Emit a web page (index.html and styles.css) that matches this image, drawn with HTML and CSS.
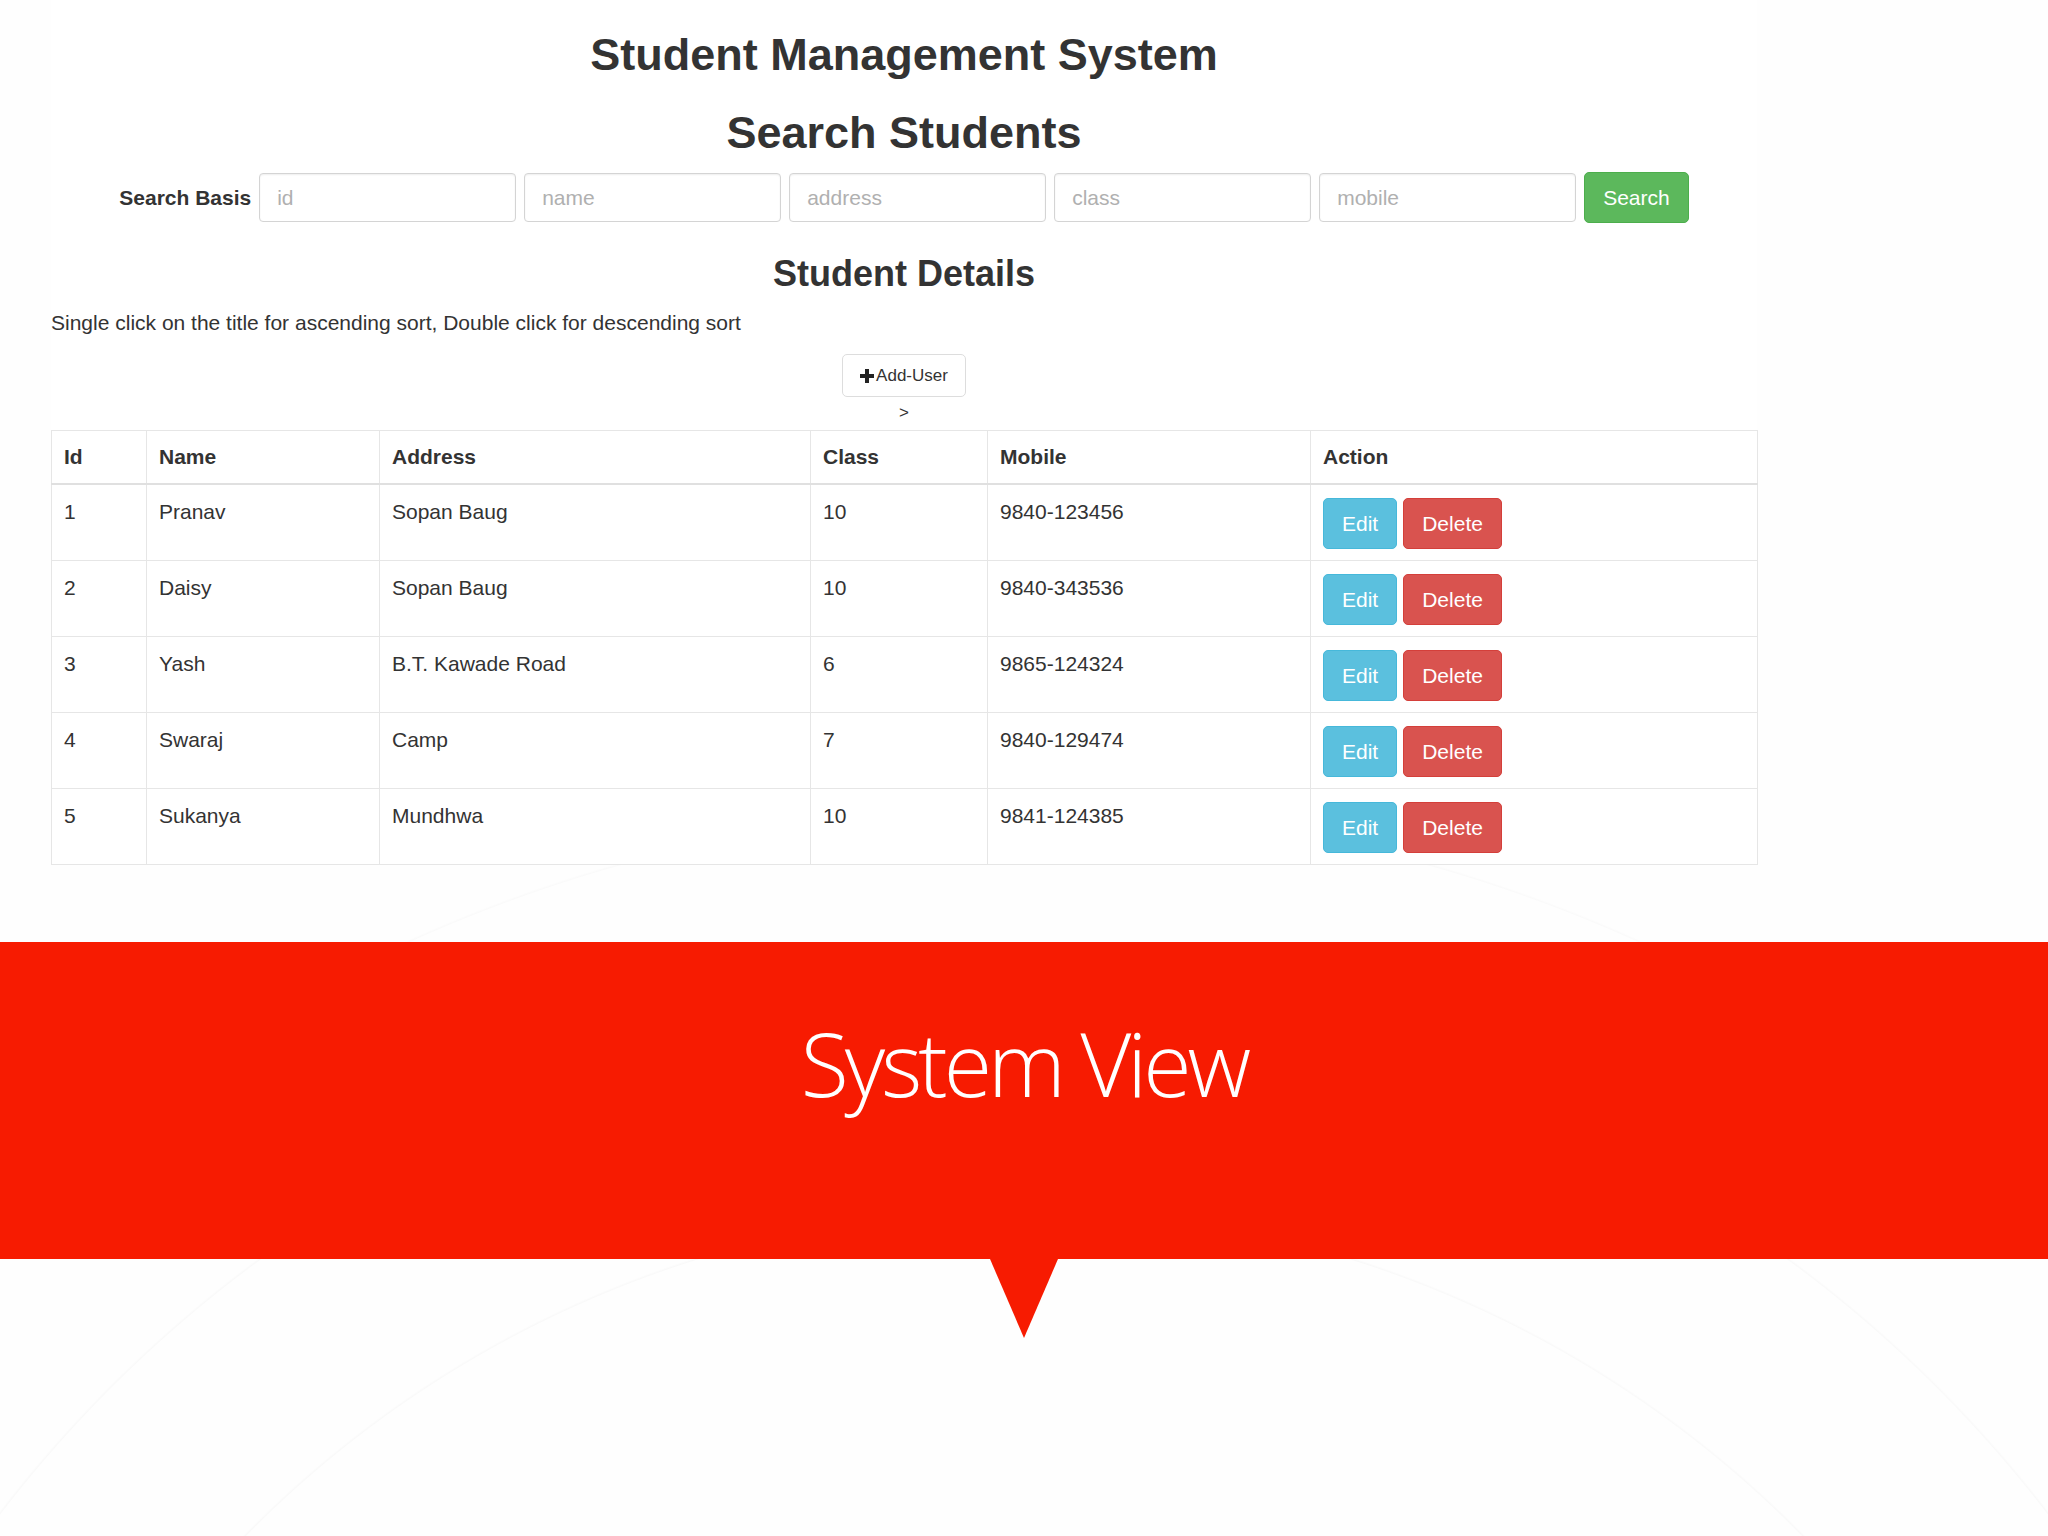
FILE: index.html
```html
<!DOCTYPE html>
<html lang="en">
<head>
<meta charset="utf-8">
<title>Student Management System</title>
<link rel="stylesheet" href="styles.css">
</head>
<body>
<div class="page">
  <main class="app">
    <h1 class="title">Student Management System</h1>
    <h1 class="title sub">Search Students</h1>
    <form class="search-row">
      <label class="search-label">Search Basis</label>
      <input class="field" type="text" placeholder="id">
      <input class="field" type="text" placeholder="name">
      <input class="field" type="text" placeholder="address">
      <input class="field" type="text" placeholder="class">
      <input class="field" type="text" placeholder="mobile">
      <button class="btn btn-success" type="button">Search</button>
    </form>
    <h2 class="details">Student Details</h2>
    <p class="hint">Single click on the title for ascending sort, Double click for descending sort</p>
    <div class="add-wrap">
      <button class="btn-add" type="button"><svg class="plus" viewBox="0 0 14 14" width="14" height="14"><path d="M5 0h4v5h5v4H9v5H5V9H0V5h5z" fill="#222"/></svg>Add-User</button>
      <span class="caret">&gt;</span>
    </div>
    <table class="grid">
      <colgroup>
        <col class="c-id"><col class="c-name"><col class="c-addr"><col class="c-class"><col class="c-mob"><col class="c-act">
      </colgroup>
      <thead>
        <tr><th>Id</th><th>Name</th><th>Address</th><th>Class</th><th>Mobile</th><th>Action</th></tr>
      </thead>
      <tbody>
        <tr><td>1</td><td>Pranav</td><td>Sopan Baug</td><td>10</td><td>9840-123456</td><td><div class="actions"><button class="btn btn-info" type="button">Edit</button><button class="btn btn-danger" type="button">Delete</button></div></td></tr>
        <tr><td>2</td><td>Daisy</td><td>Sopan Baug</td><td>10</td><td>9840-343536</td><td><div class="actions"><button class="btn btn-info" type="button">Edit</button><button class="btn btn-danger" type="button">Delete</button></div></td></tr>
        <tr><td>3</td><td>Yash</td><td>B.T. Kawade Road</td><td>6</td><td>9865-124324</td><td><div class="actions"><button class="btn btn-info" type="button">Edit</button><button class="btn btn-danger" type="button">Delete</button></div></td></tr>
        <tr><td>4</td><td>Swaraj</td><td>Camp</td><td>7</td><td>9840-129474</td><td><div class="actions"><button class="btn btn-info" type="button">Edit</button><button class="btn btn-danger" type="button">Delete</button></div></td></tr>
        <tr><td>5</td><td>Sukanya</td><td>Mundhwa</td><td>10</td><td>9841-124385</td><td><div class="actions"><button class="btn btn-info" type="button">Edit</button><button class="btn btn-danger" type="button">Delete</button></div></td></tr>
      </tbody>
    </table>
  </main>
  <section class="banner">
    <h2 class="banner-title">System View</h2>
  </section>
  <div class="pointer"></div>
</div>
</body>
</html>
```
FILE: styles.css
```css
html, body {
  margin: 0;
  padding: 0;
  background: #fefefe;
}

body {
  font-family: "Liberation Sans", Arial, sans-serif;
  color: #333;
}

.page {
  width: 2048px;
  height: 1536px;
  overflow: hidden;
  background-color: #fefefe;
  background-image:
    radial-gradient(circle at 1024px 2300px, transparent 1090px, rgba(0,0,0,0.018) 1091px, transparent 1093px),
    radial-gradient(circle at 1024px 2300px, transparent 1290px, rgba(0,0,0,0.018) 1291px, transparent 1293px),
    radial-gradient(circle at 1024px 2300px, transparent 1490px, rgba(0,0,0,0.015) 1491px, transparent 1493px);
}

.app {
  width: 1706px;
  margin-left: 51px;
  padding-top: 29px;
  background: #fff;
}

.title {
  margin: 0;
  font-size: 45px;
  line-height: 52px;
  font-weight: bold;
  text-align: center;
  color: #333;
}

.sub {
  margin-top: 26px;
}

.search-row {
  display: flex;
  justify-content: center;
  align-items: center;
  gap: 8px;
  height: 51px;
  margin: 13px 0 0;
}

.search-label {
  font-size: 21px;
  font-weight: bold;
  color: #333;
}

.field {
  width: 257px;
  height: 49px;
  box-sizing: border-box;
  padding: 0 17px;
  border: 1px solid #d4d4d4;
  border-radius: 4px;
  box-shadow: inset 0 1px 2px rgba(0,0,0,0.07);
  font-family: "Liberation Sans", Arial, sans-serif;
  font-size: 21px;
  color: #555;
  background: #fff;
}

.field::placeholder {
  color: #b0b0b0;
}

.btn {
  height: 51px;
  box-sizing: border-box;
  padding: 0 18px;
  border: 1px solid transparent;
  border-radius: 5px;
  font-family: "Liberation Sans", Arial, sans-serif;
  font-size: 21px;
  color: #fff;
  cursor: pointer;
}

.btn-success {
  background: #5cb85c;
  border-color: #4cae4c;
}

.btn-info {
  background: #5bc0de;
  border-color: #46b8da;
}

.btn-danger {
  background: #d9534f;
  border-color: #d43f3a;
}

.details {
  margin: 29px 0 0;
  font-size: 36px;
  line-height: 44px;
  font-weight: bold;
  text-align: center;
  color: #333;
}

.hint {
  margin: 13px 0 0;
  font-size: 21px;
  line-height: 28px;
  color: #333;
}

.add-wrap {
  display: flex;
  flex-direction: column;
  align-items: center;
  margin-top: 17px;
}

.btn-add {
  display: flex;
  align-items: center;
  gap: 2px;
  height: 43px;
  box-sizing: border-box;
  padding: 0 17px;
  background: #fff;
  border: 1px solid #ddd;
  border-radius: 5px;
  font-family: "Liberation Sans", Arial, sans-serif;
  font-size: 17px;
  color: #333;
}

.plus {
  display: block;
}

.caret {
  margin-top: 6px;
  font-size: 17px;
  line-height: 20px;
  color: #333;
}

.grid {
  margin-top: 7px;
  width: 1706px;
  table-layout: fixed;
  border-collapse: collapse;
  border: 1px solid #e2e2e2;
}

.c-id { width: 95px; }
.c-name { width: 233px; }
.c-addr { width: 431px; }
.c-class { width: 177px; }
.c-mob { width: 323px; }
.c-act { width: 447px; }

.grid th,
.grid td {
  border: 1px solid #e6e6e6;
  text-align: left;
  font-size: 21px;
  line-height: 28px;
  color: #333;
}

.grid th {
  padding: 12px 12px;
  font-weight: bold;
  border-bottom: 2px solid #e0e0e0;
  vertical-align: bottom;
}

.grid td {
  padding: 13px 12px 11px;
  vertical-align: top;
}

.actions {
  display: flex;
  gap: 6px;
}

.banner {
  margin-top: 77px;
  height: 317px;
  box-sizing: border-box;
  padding-top: 71px;
  background: #f71b01;
  display: flex;
  justify-content: center;
}

.banner-title {
  margin: 0;
  font-family: "Open Sans", "Noto Sans", sans-serif;
  font-weight: 300;
  font-size: 88px;
  line-height: 100px;
  letter-spacing: -4px;
  color: #fff;
}

.pointer {
  width: 0;
  height: 0;
  margin: 0 auto;
  border-left: 34px solid transparent;
  border-right: 34px solid transparent;
  border-top: 79px solid #f71b01;
}
```
